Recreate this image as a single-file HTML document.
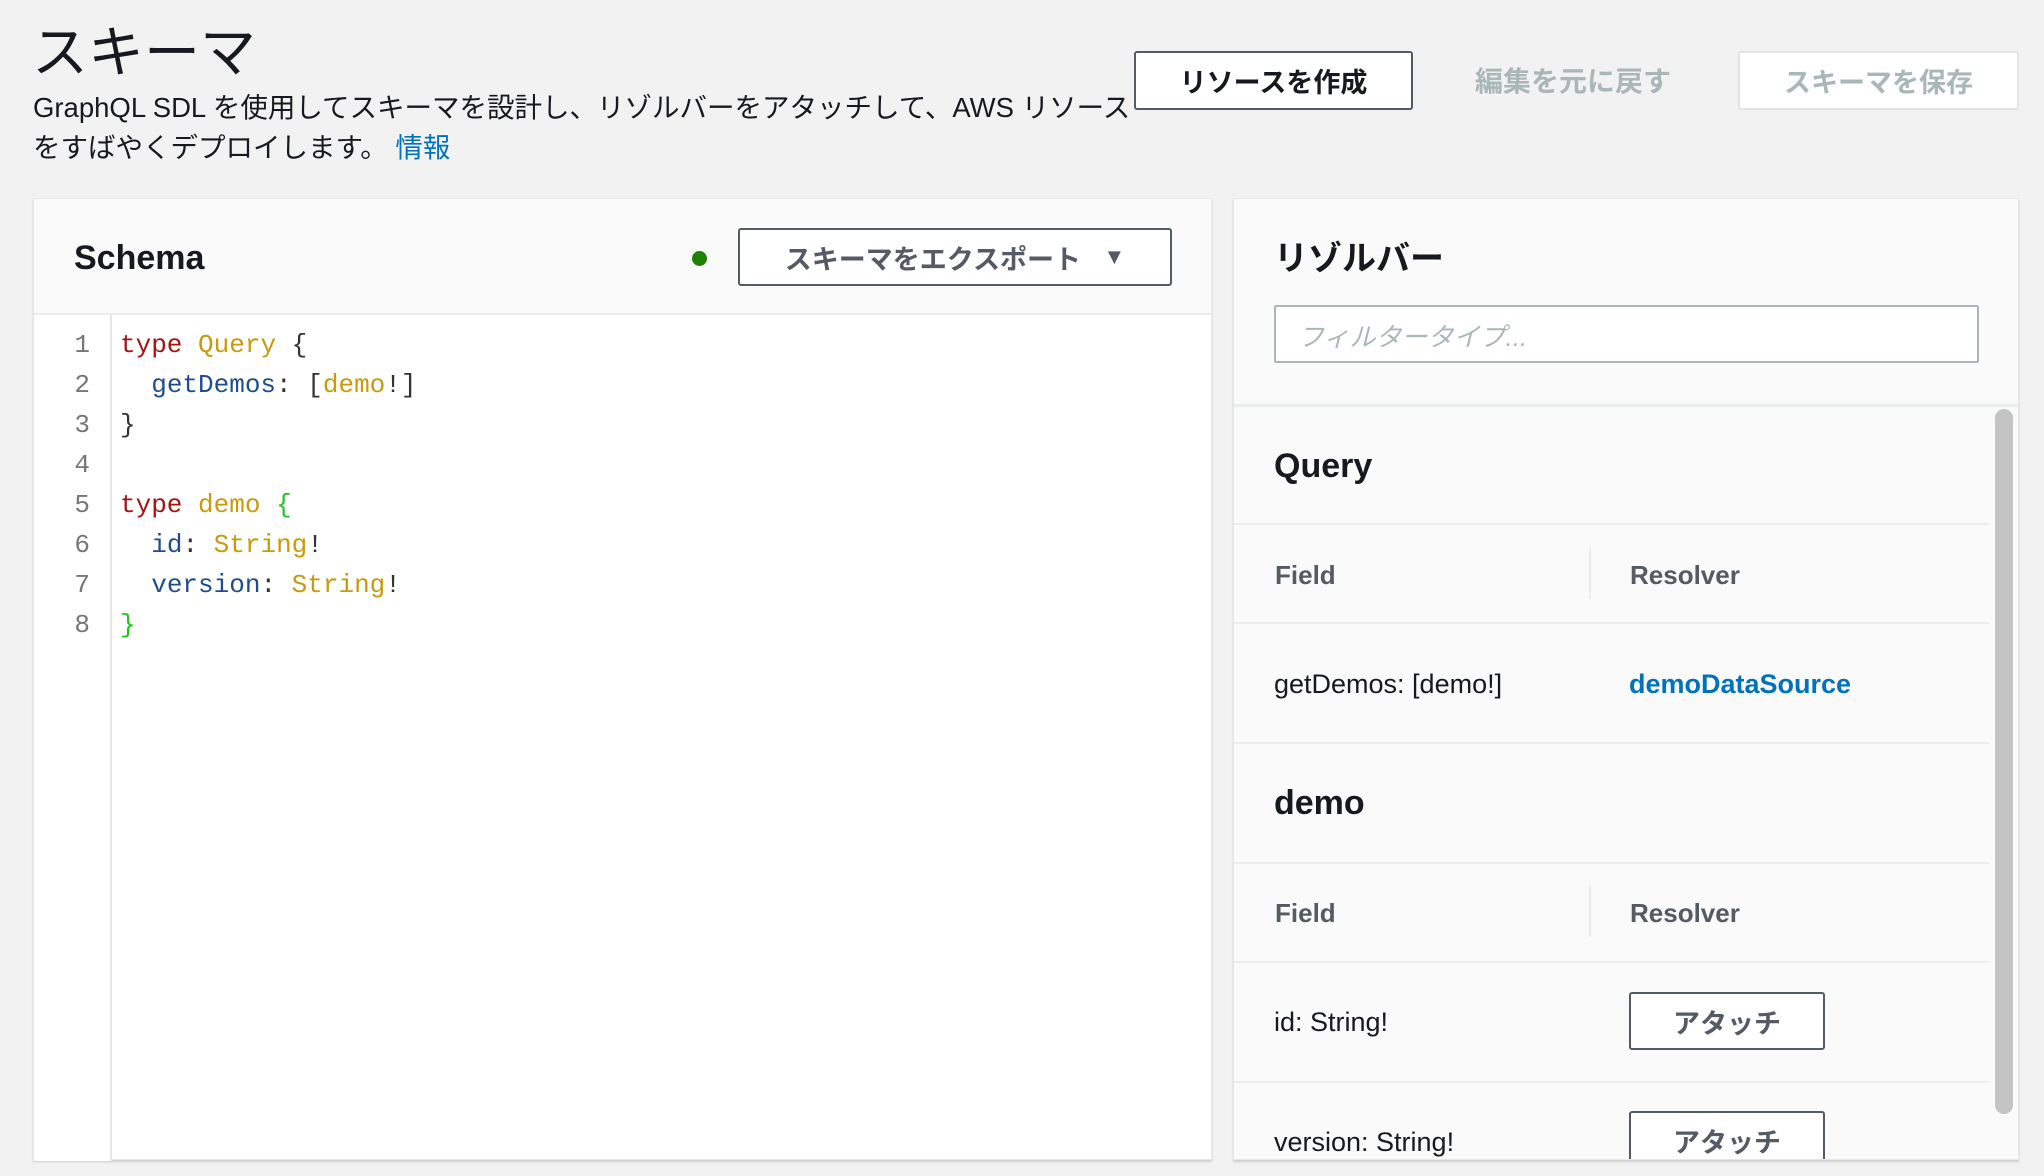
<!DOCTYPE html>
<html><head><meta charset="utf-8"><style>
*{box-sizing:border-box;margin:0;padding:0}
body{width:2044px;height:1176px;background:#f2f2f2;font-family:"Liberation Sans","Noto Sans CJK JP",sans-serif;color:#16191f;position:relative;overflow:hidden}
.a{position:absolute}
.btn{position:absolute;border:2px solid #545b64;border-radius:3px;background:#fff;font-weight:bold;font-size:27px;display:flex;align-items:center;justify-content:center;color:#545b64}
.code{font-family:"Liberation Mono","Noto Sans CJK JP",monospace;font-size:26px;line-height:40px;white-space:pre}
.kw{color:#a31515}.ty{color:#c99a0b}.fd{color:#1f4e8c}.gr{color:#22c322}.pu{color:#333}
.row{position:absolute;left:0;width:755px;border-bottom:2px solid #eaeded}
</style></head><body>
<div class="a" style="left:32px;top:8px;font-size:56px;">スキーマ</div>
<div class="a" style="left:33px;top:88px;font-size:27.5px;line-height:40px;width:1140px">GraphQL SDL を使用してスキーマを設計し、リゾルバーをアタッチして、AWS リソース<br>をすばやくデプロイします。 <span style="color:#0073bb">情報</span></div>
<div class="btn" style="left:1134px;top:51px;width:279px;height:59px;color:#16191f">リソースを作成</div>
<div class="a" style="left:1475px;top:60px;font-size:28px;font-weight:bold;color:#aab7b8">編集を元に戻す</div>
<div class="btn" style="left:1738px;top:51px;width:281px;height:59px;border-color:#e0e4e4;color:#aab7b8">スキーマを保存</div>

<div class="a" style="left:33px;top:198px;width:1179px;height:962px;background:#fff;border:1px solid #e5e8e8;box-shadow:0 2px 2px rgba(0,0,0,.15)">
 <div class="a" style="left:0;top:0;width:100%;height:116px;background:#fafafa;border-bottom:2px solid #eaeded"></div>
 <div class="a" style="left:40px;top:40px;font-size:34px;font-weight:bold">Schema</div>
 <div class="a" style="left:658px;top:52px;width:15px;height:15px;border-radius:50%;background:#1d8102"></div>
 <div class="btn" style="left:704px;top:29px;width:434px;height:58px;color:#545b64">スキーマをエクスポート&nbsp;&nbsp;&nbsp;<span style="font-size:22px">▼</span></div>
 <div class="a" style="left:0;top:116px;width:78px;height:846px;border-right:2px solid #e5e8e8;background:#fff"></div>
 <div class="a code" style="left:0;top:126px;width:56px;text-align:right;color:#777">1
2
3
4
5
6
7
8</div>
 <div class="a code" style="left:86px;top:126px"><span class="kw">type</span> <span class="ty">Query</span> <span class="pu">{</span>
  <span class="fd">getDemos</span><span class="pu">: [</span><span class="ty">demo</span><span class="pu">!]</span>
<span class="pu">}</span>

<span class="kw">type</span> <span class="ty">demo</span> <span class="gr">{</span>
  <span class="fd">id</span><span class="pu">: </span><span class="ty">String</span><span class="pu">!</span>
  <span class="fd">version</span><span class="pu">: </span><span class="ty">String</span><span class="pu">!</span>
<span class="gr">}</span></div>
</div>

<div class="a" style="left:1233px;top:198px;width:786px;height:962px;background:#fafafa;border:1px solid #e5e8e8;box-shadow:0 2px 2px rgba(0,0,0,.15);overflow:hidden">
 <div class="a" style="left:40px;top:32px;font-size:34px;font-weight:bold">リゾルバー</div>
 <div class="a" style="left:40px;top:106px;width:705px;height:58px;background:#fff;border:2px solid #aab7b8;border-radius:2px;font-size:26px;color:#aab7b8;font-style:italic;padding:10px 22px">フィルタータイプ...</div>
 <div class="a" style="left:0;top:205px;width:100%;height:3px;background:#eaeded"></div>
 <div class="a" style="left:0;top:208px;width:755px;height:760px">
  <div class="row" style="top:0;height:118px"></div>
  <div class="a" style="left:40px;top:40px;font-size:34px;font-weight:bold">Query</div>
  <div class="row" style="top:118px;height:99px"></div>
  <div class="a" style="left:41px;top:153px;font-size:26px;font-weight:bold;color:#545b64">Field</div>
  <div class="a" style="left:355px;top:140px;width:2px;height:52px;background:#eaeded"></div>
  <div class="a" style="left:396px;top:153px;font-size:26px;font-weight:bold;color:#545b64">Resolver</div>
  <div class="row" style="top:217px;height:120px"></div>
  <div class="a" style="left:40px;top:262px;font-size:27px">getDemos: [demo!]</div>
  <div class="a" style="left:395px;top:262px;font-size:27px;font-weight:bold;color:#0073bb">demoDataSource</div>
  <div class="row" style="top:337px;height:120px"></div>
  <div class="a" style="left:40px;top:377px;font-size:34px;font-weight:bold">demo</div>
  <div class="row" style="top:457px;height:99px"></div>
  <div class="a" style="left:41px;top:491px;font-size:26px;font-weight:bold;color:#545b64">Field</div>
  <div class="a" style="left:355px;top:478px;width:2px;height:52px;background:#eaeded"></div>
  <div class="a" style="left:396px;top:491px;font-size:26px;font-weight:bold;color:#545b64">Resolver</div>
  <div class="row" style="top:556px;height:120px"></div>
  <div class="a" style="left:40px;top:600px;font-size:27px">id: String!</div>
  <div class="btn" style="left:395px;top:585px;width:196px;height:58px;color:#545b64">アタッチ</div>
  <div class="a" style="left:40px;top:720px;font-size:27px">version: String!</div>
  <div class="btn" style="left:395px;top:704px;width:196px;height:58px;color:#545b64">アタッチ</div>
 </div>
 <div class="a" style="left:761px;top:210px;width:18px;height:705px;border-radius:9px;background:#c4c4c4"></div>
</div>
</body></html>
